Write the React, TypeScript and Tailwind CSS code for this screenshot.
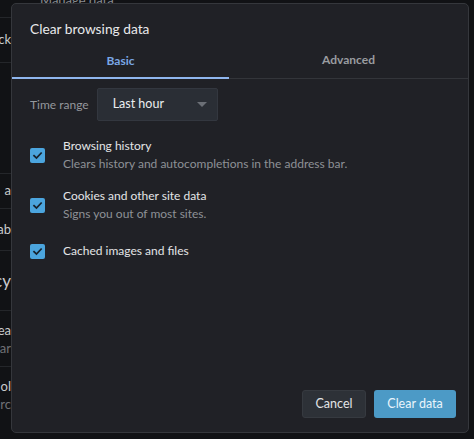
import React from "react";

const font = { fontFamily: 'Lato, "Noto Sans", Arial, sans-serif' };

function Check() {
  return (
    <div className="w-[15px] h-[15px] rounded-[2px] bg-[#4ba5de] flex items-center justify-center shrink-0">
      <svg width="11" height="11" viewBox="0 0 12 12" fill="none">
        <path d="M2.2 6.2 L4.9 8.8 L9.9 3.4" stroke="#17232e" strokeWidth="1.9" strokeLinecap="square" />
      </svg>
    </div>
  );
}

function Row({ title, sub }: { title: string; sub?: string }) {
  return (
    <div className="flex items-center gap-[18px]">
      <Check />
      <div className="flex flex-col">
        <div className="text-[12px] leading-[18px] text-[#e4e5e7]">{title}</div>
        {sub && <div className="text-[12px] leading-[18px] text-[#8e9196]">{sub}</div>}
      </div>
    </div>
  );
}

export default function App() {
  return (
    <div className="relative w-[474px] h-[439px] overflow-hidden bg-[#111215]" style={font}>
      {/* background page (partially visible) */}
      <div className="absolute left-[40px] top-[-9px] text-[13px] text-[#8a8c90] whitespace-nowrap">Manage data</div>
      <div className="flex flex-col w-[11px] overflow-hidden text-[#c9cacc]">
        <div className="h-[18px] border-b border-[#24262a]" />
        <div className="h-[45px] flex items-center justify-end text-[13px] whitespace-nowrap border-b border-[#24262a]">ck</div>
        <div className="h-[110px]" />
        <div className="h-[36px] flex items-center justify-end text-[13px] whitespace-nowrap border-b border-[#24262a] border-t">a</div>
        <div className="h-[42px] flex items-center justify-end text-[13px] whitespace-nowrap border-b border-[#24262a]">ab</div>
        <div className="h-[60px] flex items-center justify-end text-[17px] whitespace-nowrap border-b border-[#24262a]">cy</div>
        <div className="h-[56px] flex flex-col items-end justify-center text-[13px] leading-[18px] whitespace-nowrap border-b border-[#24262a]">
          <span>ea</span>
          <span className="text-[#6f7175]">ar</span>
        </div>
        <div className="h-[56px] flex flex-col items-end justify-center text-[13px] leading-[18px] whitespace-nowrap">
          <span>ol</span>
          <span className="text-[#6f7175]">rc</span>
        </div>
      </div>

      {/* dialog */}
      <div className="absolute left-[11px] top-[3px] w-[458px] h-[430px] rounded-[5px] bg-[#202126] border border-[#35373c] flex flex-col">
        <div className="pl-[18px] pt-[15px] h-[40px] text-[13.75px] leading-[20px] text-[#e8e9eb]">Clear browsing data</div>
        <div className="flex h-[35px] border-b border-[#33353a]">
          <div className="w-[217px] flex flex-col">
            <div className="flex-1 flex items-center justify-center text-[12px] font-bold text-[#7aa7e6]">Basic</div>
            <div className="h-[2px] bg-[#8fb6ee] mb-[-1px]" />
          </div>
          <div className="flex-1 flex items-center justify-center text-[12px] font-bold text-[#9a9ca0] pb-[2px]">Advanced</div>
        </div>
        <div className="flex items-center pl-[18px] pt-[9px] gap-[8px]">
          <span className="text-[12px] text-[#95989d]">Time range</span>
          <div className="w-[121px] h-[33px] bg-[#2a2e35] border border-[#33373f] rounded-[2px] flex items-center justify-between pl-[15px] pr-[10px]">
            <span className="text-[12.5px] text-[#eceef0]">Last hour</span>
            <svg width="10" height="6" viewBox="0 0 10 6">
              <path d="M0 0 L10 0 L5 5 Z" fill="#6b6f76" />
            </svg>
          </div>
        </div>
        <div className="flex flex-col pl-[18px] pt-[16px] gap-[14px]">
          <Row title="Browsing history" sub="Clears history and autocompletions in the address bar." />
          <Row title="Cookies and other site data" sub="Signs you out of most sites." />
          <div className="pt-[5px]">
            <Row title="Cached images and files" />
          </div>
        </div>
        <div className="flex-1" />
        <div className="flex justify-end gap-[8px] pr-[12px] pb-[14px]">
          <button className="w-[64px] h-[28px] rounded-[3px] bg-[#2d3137] border border-[#363a40] text-[12.5px] text-[#e3e4e6]">Cancel</button>
          <button className="w-[82px] h-[28px] rounded-[3px] bg-[#4c9ac6] text-[12.5px] text-[#eaf5fc]">Clear data</button>
        </div>
      </div>
    </div>
  );
}
